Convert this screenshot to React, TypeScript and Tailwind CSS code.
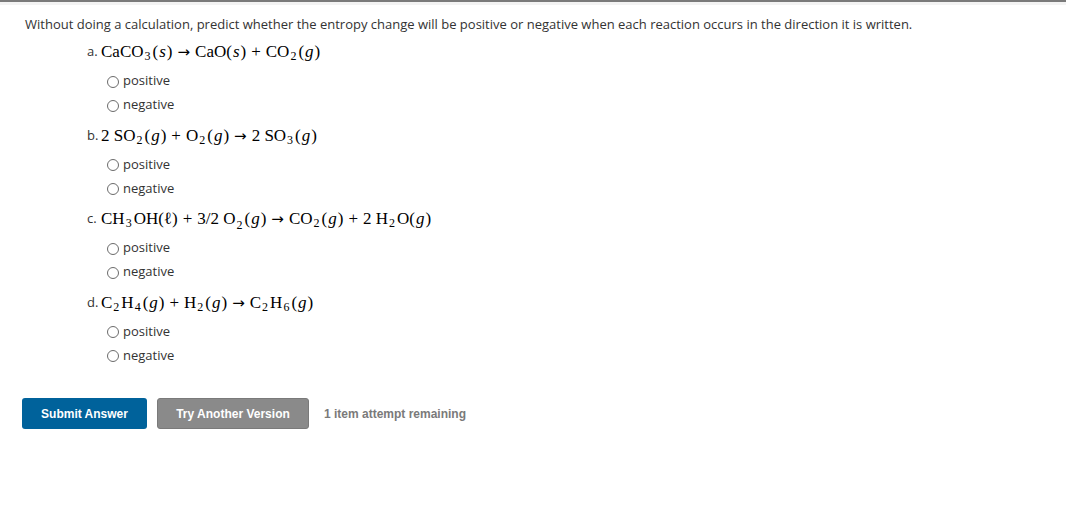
import type { ReactNode } from 'react'

const sans = { fontFamily: '"Open Sans", "Liberation Sans", sans-serif' }

function Sub({ children, low }: { children: ReactNode; low?: boolean }) {
  return (
    <sub
      className={
        low
          ? 'text-[12px] relative top-[5px] align-baseline ml-[1px] mr-[2px]'
          : 'text-[12px] relative top-[3px] align-baseline ml-[1px] mr-[2px]'
      }
    >
      {children}
    </sub>
  )
}

function St({ s }: { s: string }) {
  return (
    <span>
      (<i className="mx-[1px]">{s}</i>)
    </span>
  )
}

function Op({ children, arrow }: { children: ReactNode; arrow?: boolean }) {
  if (arrow)
    return (
      <span className="mx-[5px] text-[15px]" style={{ fontFamily: '"DejaVu Sans", sans-serif' }}>
        {children}
      </span>
    )
  return <span className="mx-[5px]">{children}</span>
}

function Radio({ label }: { label: string }) {
  return (
    <label className="flex items-center h-[24px] text-[13px] text-[#333]" style={sans}>
      <span className="w-[12px] h-[12px] rounded-full border border-[#6b6b6b] bg-white mr-[4px] mt-[1px]" />
      <span>{label}</span>
    </label>
  )
}

function Item({ letter, eq }: { letter: string; eq: ReactNode }) {
  return (
    <div className="h-[79.5px]">
      <div className="flex items-center h-[28px]">
        <span className="text-[13px] text-[#333] w-[14px]" style={sans}>
          {letter}
        </span>
        <span
          className="text-[17px] text-black whitespace-nowrap"
          style={{ fontFamily: '"Liberation Serif", "DejaVu Serif", serif' }}
        >
          {eq}
        </span>
      </div>
      <div className="pl-[20px] mt-[3px]">
        <Radio label="positive" />
        <Radio label="negative" />
      </div>
    </div>
  )
}

export default function App() {
  return (
    <div className="w-[1066px] h-[514px] bg-white overflow-hidden">
      <div className="h-[2px] bg-[#7a7a7a]" />
      <div className="h-[3px] bg-[#f3f3f3]" />
      <div className="pl-[25px] pt-[11px]">
        <p className="text-[13px] text-[#333] leading-[16px]" style={sans}>
          Without doing a calculation, predict whether the entropy change will be positive or negative when each reaction occurs in the direction it is written.
        </p>
        <div className="pl-[62px] mt-[6px] flex flex-col gap-[4px]">
          <Item
            letter="a."
            eq={
              <>
                CaCO<Sub>3</Sub>
                <St s="s" />
                <Op arrow>→</Op>CaO
                <St s="s" />
                <Op>+</Op>CO<Sub>2</Sub>
                <St s="g" />
              </>
            }
          />
          <Item
            letter="b."
            eq={
              <>
                2 SO<Sub>2</Sub>
                <St s="g" />
                <Op>+</Op>O<Sub>2</Sub>
                <St s="g" />
                <Op arrow>→</Op>2 SO<Sub>3</Sub>
                <St s="g" />
              </>
            }
          />
          <Item
            letter="c."
            eq={
              <>
                CH<Sub>3</Sub>OH(ℓ)
                <Op>+</Op>3/2 O<Sub low>2</Sub>
                <St s="g" />
                <Op arrow>→</Op>CO<Sub>2</Sub>
                <St s="g" />
                <Op>+</Op>2 H<Sub>2</Sub>O
                <St s="g" />
              </>
            }
          />
          <Item
            letter="d."
            eq={
              <>
                C<Sub>2</Sub>H<Sub>4</Sub>
                <St s="g" />
                <Op>+</Op>H<Sub>2</Sub>
                <St s="g" />
                <Op arrow>→</Op>C<Sub>2</Sub>H<Sub>6</Sub>
                <St s="g" />
              </>
            }
          />
        </div>
        <div className="flex items-center mt-[30px] -ml-[3px]" style={{ fontFamily: 'Arial, "Liberation Sans", sans-serif' }}>
          <button className="h-[31px] w-[125px] rounded-[3px] bg-[#00629b] text-white text-[12px] font-bold">
            Submit Answer
          </button>
          <button className="h-[31px] w-[152px] ml-[10px] rounded-[3px] bg-[#8a8a8a] border border-[#7a7a7a] text-white text-[12px] font-bold">
            Try Another Version
          </button>
          <span className="ml-[15px] text-[12px] font-bold text-[#7a7a7a]">1 item attempt remaining</span>
        </div>
      </div>
    </div>
  )
}
